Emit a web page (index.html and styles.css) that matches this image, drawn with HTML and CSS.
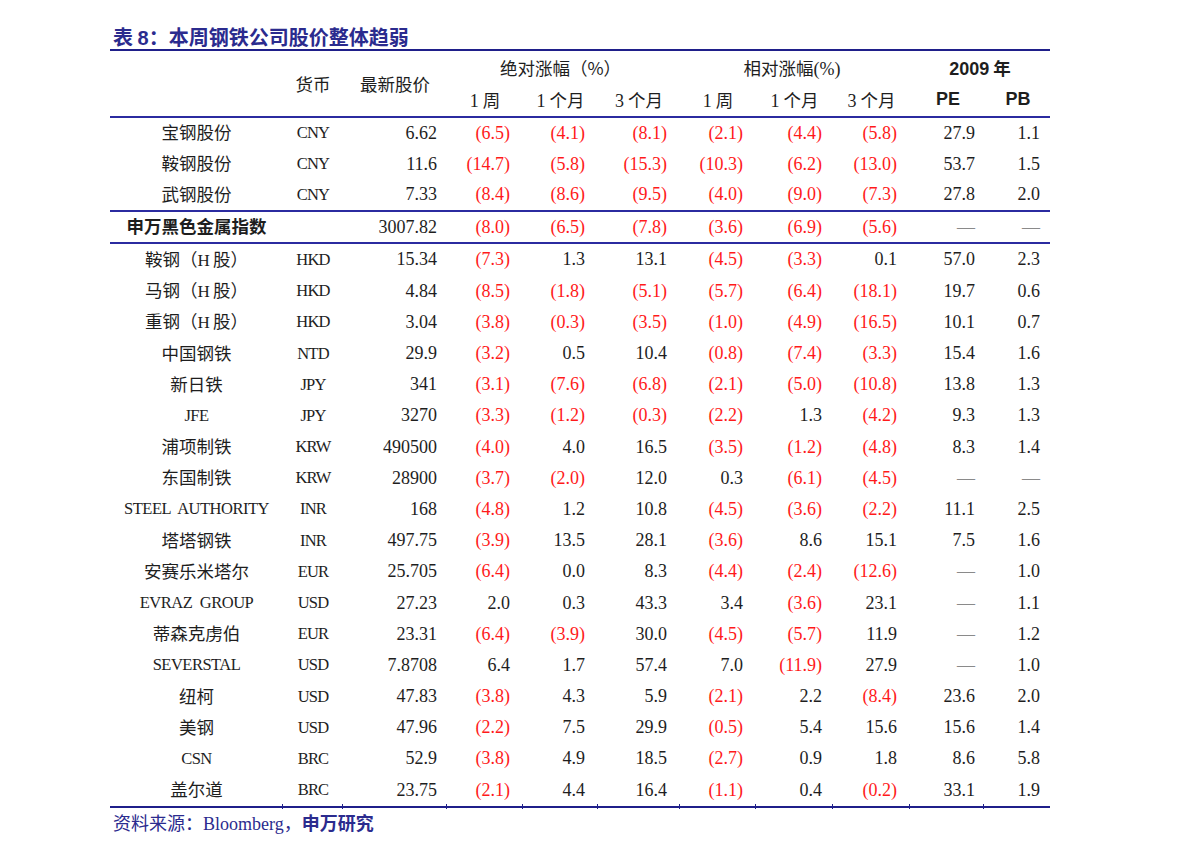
FILE: index.html
```html
<!DOCTYPE html>
<html lang="zh-CN">
<head>
<meta charset="utf-8">
<title>表 8：本周钢铁公司股价整体趋弱</title>
<link rel="stylesheet" href="styles.css">
</head>
<body>
<div class="page">
  <div class="title">表 <span class="tn">8</span>：本周钢铁公司股价整体趋弱</div>
  <table class="tbl">
    <colgroup>
      <col style="width:173px"><col style="width:60px"><col style="width:104px">
      <col style="width:76px"><col style="width:75px"><col style="width:82px">
      <col style="width:76px"><col style="width:77px"><col style="width:77px">
      <col style="width:74px"><col style="width:66px">
    </colgroup>
    <thead>
      <tr class="h1">
        <th rowspan="2"></th>
        <th rowspan="2">货币</th>
        <th rowspan="2">最新股价</th>
        <th colspan="3" class="grp">绝对涨幅（%）</th>
        <th colspan="3" class="grp">相对涨幅<span class="m">(%)</span></th>
        <th colspan="2" class="bold"><span class="ar">2009</span> 年</th>
      </tr>
      <tr class="h2">
        <th><span class="m">1</span> 周</th>
        <th><span class="m">1</span> 个月</th>
        <th><span class="m">3</span> 个月</th>
        <th><span class="m">1</span> 周</th>
        <th><span class="m">1</span> 个月</th>
        <th><span class="m">3</span> 个月</th>
        <th class="ar">PE</th>
        <th class="ar">PB</th>
      </tr>
    </thead>
    <tbody class="s1">
      <tr class="first"><td class="nm">宝钢股份</td><td class="cu">CNY</td><td>6.62</td><td class="r">(6.5)</td><td class="r">(4.1)</td><td class="r">(8.1)</td><td class="r">(2.1)</td><td class="r">(4.4)</td><td class="r">(5.8)</td><td>27.9</td><td>1.1</td></tr>
      <tr><td class="nm">鞍钢股份</td><td class="cu">CNY</td><td>11.6</td><td class="r">(14.7)</td><td class="r">(5.8)</td><td class="r">(15.3)</td><td class="r">(10.3)</td><td class="r">(6.2)</td><td class="r">(13.0)</td><td>53.7</td><td>1.5</td></tr>
      <tr><td class="nm">武钢股份</td><td class="cu">CNY</td><td>7.33</td><td class="r">(8.4)</td><td class="r">(8.6)</td><td class="r">(9.5)</td><td class="r">(4.0)</td><td class="r">(9.0)</td><td class="r">(7.3)</td><td>27.8</td><td>2.0</td></tr>
    </tbody>
    <tbody class="s2">
      <tr class="idx"><td class="nm b">申万黑色金属指数</td><td class="cu"></td><td>3007.82</td><td class="r">(8.0)</td><td class="r">(6.5)</td><td class="r">(7.8)</td><td class="r">(3.6)</td><td class="r">(6.9)</td><td class="r">(5.6)</td><td class="d">—</td><td class="d">—</td></tr>
    </tbody>
    <tbody class="s3">
      <tr class="first"><td class="nm">鞍钢（<span class="h">H</span>股）</td><td class="cu">HKD</td><td>15.34</td><td class="r">(7.3)</td><td>1.3</td><td>13.1</td><td class="r">(4.5)</td><td class="r">(3.3)</td><td>0.1</td><td>57.0</td><td>2.3</td></tr>
      <tr><td class="nm">马钢（<span class="h">H</span>股）</td><td class="cu">HKD</td><td>4.84</td><td class="r">(8.5)</td><td class="r">(1.8)</td><td class="r">(5.1)</td><td class="r">(5.7)</td><td class="r">(6.4)</td><td class="r">(18.1)</td><td>19.7</td><td>0.6</td></tr>
      <tr><td class="nm">重钢（<span class="h">H</span>股）</td><td class="cu">HKD</td><td>3.04</td><td class="r">(3.8)</td><td class="r">(0.3)</td><td class="r">(3.5)</td><td class="r">(1.0)</td><td class="r">(4.9)</td><td class="r">(16.5)</td><td>10.1</td><td>0.7</td></tr>
      <tr><td class="nm">中国钢铁</td><td class="cu">NTD</td><td>29.9</td><td class="r">(3.2)</td><td>0.5</td><td>10.4</td><td class="r">(0.8)</td><td class="r">(7.4)</td><td class="r">(3.3)</td><td>15.4</td><td>1.6</td></tr>
      <tr><td class="nm">新日铁</td><td class="cu">JPY</td><td>341</td><td class="r">(3.1)</td><td class="r">(7.6)</td><td class="r">(6.8)</td><td class="r">(2.1)</td><td class="r">(5.0)</td><td class="r">(10.8)</td><td>13.8</td><td>1.3</td></tr>
      <tr><td class="lat">JFE</td><td class="cu">JPY</td><td>3270</td><td class="r">(3.3)</td><td class="r">(1.2)</td><td class="r">(0.3)</td><td class="r">(2.2)</td><td>1.3</td><td class="r">(4.2)</td><td>9.3</td><td>1.3</td></tr>
      <tr><td class="nm">浦项制铁</td><td class="cu">KRW</td><td>490500</td><td class="r">(4.0)</td><td>4.0</td><td>16.5</td><td class="r">(3.5)</td><td class="r">(1.2)</td><td class="r">(4.8)</td><td>8.3</td><td>1.4</td></tr>
      <tr><td class="nm">东国制铁</td><td class="cu">KRW</td><td>28900</td><td class="r">(3.7)</td><td class="r">(2.0)</td><td>12.0</td><td>0.3</td><td class="r">(6.1)</td><td class="r">(4.5)</td><td class="d">—</td><td class="d">—</td></tr>
      <tr><td class="lat">STEEL AUTHORITY</td><td class="cu">INR</td><td>168</td><td class="r">(4.8)</td><td>1.2</td><td>10.8</td><td class="r">(4.5)</td><td class="r">(3.6)</td><td class="r">(2.2)</td><td>11.1</td><td>2.5</td></tr>
      <tr><td class="nm">塔塔钢铁</td><td class="cu">INR</td><td>497.75</td><td class="r">(3.9)</td><td>13.5</td><td>28.1</td><td class="r">(3.6)</td><td>8.6</td><td>15.1</td><td>7.5</td><td>1.6</td></tr>
      <tr><td class="nm">安赛乐米塔尔</td><td class="cu">EUR</td><td>25.705</td><td class="r">(6.4)</td><td>0.0</td><td>8.3</td><td class="r">(4.4)</td><td class="r">(2.4)</td><td class="r">(12.6)</td><td class="d">—</td><td>1.0</td></tr>
      <tr><td class="lat">EVRAZ GROUP</td><td class="cu">USD</td><td>27.23</td><td>2.0</td><td>0.3</td><td>43.3</td><td>3.4</td><td class="r">(3.6)</td><td>23.1</td><td class="d">—</td><td>1.1</td></tr>
      <tr><td class="nm">蒂森克虏伯</td><td class="cu">EUR</td><td>23.31</td><td class="r">(6.4)</td><td class="r">(3.9)</td><td>30.0</td><td class="r">(4.5)</td><td class="r">(5.7)</td><td>11.9</td><td class="d">—</td><td>1.2</td></tr>
      <tr><td class="lat">SEVERSTAL</td><td class="cu">USD</td><td>7.8708</td><td>6.4</td><td>1.7</td><td>57.4</td><td>7.0</td><td class="r">(11.9)</td><td>27.9</td><td class="d">—</td><td>1.0</td></tr>
      <tr><td class="nm">纽柯</td><td class="cu">USD</td><td>47.83</td><td class="r">(3.8)</td><td>4.3</td><td>5.9</td><td class="r">(2.1)</td><td>2.2</td><td class="r">(8.4)</td><td>23.6</td><td>2.0</td></tr>
      <tr><td class="nm">美钢</td><td class="cu">USD</td><td>47.96</td><td class="r">(2.2)</td><td>7.5</td><td>29.9</td><td class="r">(0.5)</td><td>5.4</td><td>15.6</td><td>15.6</td><td>1.4</td></tr>
      <tr><td class="lat">CSN</td><td class="cu">BRC</td><td>52.9</td><td class="r">(3.8)</td><td>4.9</td><td>18.5</td><td class="r">(2.7)</td><td>0.9</td><td>1.8</td><td>8.6</td><td>5.8</td></tr>
      <tr class="last"><td class="nm">盖尔道</td><td class="cu">BRC</td><td>23.75</td><td class="r">(2.1)</td><td>4.4</td><td>16.4</td><td class="r">(1.1)</td><td>0.4</td><td class="r">(0.2)</td><td>33.1</td><td>1.9</td></tr>
    </tbody>
  </table>
  <div class="source">资料来源：<span class="en">Bloomberg</span>，<span class="sw">申万研究</span></div>
</div>
</body>
</html>
```

FILE: styles.css
```css
html, body {
  margin: 0;
  padding: 0;
  background: #ffffff;
}

body {
  font-family: "Liberation Serif", "Noto Sans CJK SC", serif;
  color: #1e1e1e;
  text-spacing-trim: space-all;
}

.page {
  padding-left: 110px;
  width: 940px;
}

.title {
  height: 49px;
  box-sizing: border-box;
  padding: 25px 0 0 3px;
  font-family: "Noto Sans CJK SC", sans-serif;
  font-weight: bold;
  font-size: 20px;
  line-height: 24px;
  color: #2b2b8e;
  white-space: nowrap;
}

.title .tn {
  font-family: "Liberation Sans", sans-serif;
}

.tbl {
  border-collapse: collapse;
  table-layout: fixed;
  width: 940px;
}

.tbl thead tr.h1 {
  border-top: 2px solid #1f1f8a;
}

.tbl th {
  padding: 0;
  height: 32.5px;
  font-weight: normal;
  font-family: "Noto Sans CJK SC", sans-serif;
  font-size: 17.5px;
  text-align: center;
  vertical-align: middle;
  white-space: nowrap;
  color: #1e1e1e;
}

.tbl th .m {
  font-family: "Liberation Serif", serif;
  font-size: 18px;
}

.tbl th.grp {
  padding-right: 6px;
}

.tbl th.bold {
  font-weight: bold;
}

.tbl th .ar,
.tbl th.ar {
  font-family: "Liberation Sans", sans-serif;
  font-weight: bold;
  font-size: 18px;
}

.tbl th.ar {
  padding-left: 2px;
}

.tbl tbody.s1 tr.first,
.tbl tbody.s2 tr,
.tbl tbody.s3 tr.first {
  border-top: 2px solid #2b2ba0;
}

.tbl tbody.s3 tr.last {
  border-bottom: 2px solid #1f1f8a;
}

.tbl td {
  padding: 0 13px 0 0;
  text-align: right;
  vertical-align: middle;
  white-space: nowrap;
  font-family: "Liberation Serif", serif;
  font-size: 18px;
  color: #1e1e1e;
}

.tbl tbody.s1 td {
  height: 30.8px;
}

.tbl tbody.s2 td {
  height: 30px;
}

.tbl tbody.s3 td {
  height: 31.2px;
}

.tbl td:nth-child(3) {
  padding-right: 10px;
}

.tbl td:nth-child(8) {
  padding-right: 11px;
}

.tbl td:nth-child(10) {
  padding-right: 9px;
}

.tbl td:nth-child(11) {
  padding-right: 10px;
}

.tbl tbody.s1 td.nm,
.tbl tbody.s2 td.nm,
.tbl tbody.s3 td.nm {
  height: auto;
  padding: 0 0 3px 0;
  text-align: center;
  font-family: "Noto Sans CJK SC", sans-serif;
  font-size: 17.5px;
}

.tbl td.nm.b {
  font-weight: bold;
}

.tbl td.nm .h {
  font-family: "Liberation Serif", serif;
  font-size: 17px;
  margin-right: 3px;
}

.tbl td.lat {
  padding: 0;
  text-align: center;
  font-size: 16.5px;
  letter-spacing: -0.5px;
  word-spacing: 4px;
}

.tbl td.cu {
  padding: 0;
  text-align: center;
  font-size: 16.5px;
  letter-spacing: -0.8px;
}

.tbl td.r {
  color: #ff1a1a;
}

.tbl td.d {
  color: #8a8a8a;
}

.tbl tr.last td {
  position: relative;
}

.tbl tr.last td + td::before {
  content: "";
  position: absolute;
  left: -1px;
  bottom: -3px;
  width: 1px;
  height: 5px;
  background: #1f1f8a;
}

.source {
  padding: 1px 0 0 3px;
  font-family: "Noto Sans CJK SC", sans-serif;
  font-size: 18px;
  line-height: 26px;
  color: #2b2b8e;
  white-space: nowrap;
}

.source .en {
  font-family: "Liberation Serif", serif;
}

.source .sw {
  font-weight: bold;
}
```
